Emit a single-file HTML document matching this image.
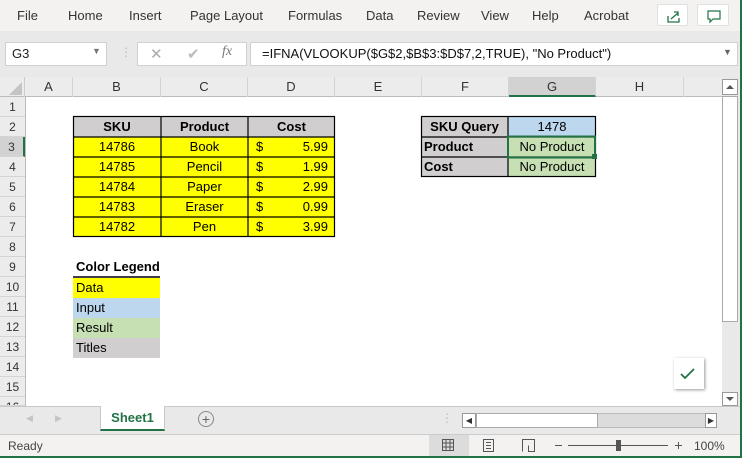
<!DOCTYPE html><html><head><style>
*{box-sizing:border-box;margin:0;padding:0}
body{width:742px;height:458px;overflow:hidden;background:#e9e9e9;font-family:"Liberation Sans",sans-serif;position:relative;font-size:13px;color:#222}
.a{position:absolute}
.tab{position:absolute;top:8px;font-size:13px;color:#333}
.c{position:absolute;height:20px;line-height:20px;font-size:13px;color:#000;text-align:center}
.ch{position:absolute;top:77px;height:20px;line-height:20px;text-align:center;color:#333;font-size:13px;border-right:1px solid #d4d4d4}
.rh{position:absolute;left:0;width:25px;height:20px;line-height:20px;text-align:center;color:#333;font-size:12px;border-bottom:1px solid #d4d4d4;background:#ececec}
</style></head><body>
<div class="a" style="left:0;top:0;width:742px;height:31px;background:#f3f2f1"></div>
<div class="tab" style="left:17px">File</div><div class="tab" style="left:68px">Home</div><div class="tab" style="left:129px">Insert</div><div class="tab" style="left:190px">Page Layout</div><div class="tab" style="left:288px">Formulas</div><div class="tab" style="left:366px">Data</div><div class="tab" style="left:417px">Review</div><div class="tab" style="left:481px">View</div><div class="tab" style="left:532px">Help</div><div class="tab" style="left:584px">Acrobat</div>
<div class="a" style="left:657px;top:4px;width:31px;height:22px;background:#fff;border:1px solid #e0e0e0;border-radius:2px"><svg width="31" height="22"><path d="M10 11v6h11v-4M13 14l7-6M16 7h4v4" stroke="#217346" fill="none" stroke-width="1.3"/></svg></div>
<div class="a" style="left:697px;top:4px;width:32px;height:22px;background:#fff;border:1px solid #e0e0e0;border-radius:2px"><svg width="32" height="22"><path d="M10 6h12v8h-7l-3 3v-3h-2z" stroke="#217346" fill="none" stroke-width="1.2"/></svg></div>
<div class="a" style="left:5px;top:42px;width:102px;height:24px;background:#fff;border:1px solid #d0d0d0"></div>
<div class="a" style="left:12px;top:46px;font-size:13px">G3</div>
<div class="a" style="left:92px;top:46px;font-size:9px;color:#777">▼</div>
<div class="a" style="left:120px;top:45px;color:#bbb;font-size:12px">⋮</div>
<div class="a" style="left:137px;top:42px;width:110px;height:24px;background:#fff;border:1px solid #d0d0d0"></div>
<div class="a" style="left:150px;top:45px;color:#aaa;font-size:15px">✕</div>
<div class="a" style="left:187px;top:45px;color:#bbb;font-size:15px">✔</div>
<div class="a" style="left:222px;top:44px;color:#777;font-style:italic;font-family:'Liberation Serif',serif;font-size:14px">fx</div>
<div class="a" style="left:250px;top:42px;width:488px;height:24px;background:#fff;border:1px solid #d0d0d0"></div>
<div class="a" style="left:262px;top:46px;font-size:13px;color:#111">=IFNA(VLOOKUP($G$2,$B$3:$D$7,2,TRUE), "No Product")</div>
<div class="a" style="left:723px;top:47px;font-size:9px;color:#666">▼</div>
<!-- grid -->
<div class="a" style="left:0;top:77px;width:722px;height:329px;background:#fff"></div>
<div class="a" style="left:0;top:77px;width:722px;height:20px;background:#ececec;border-bottom:1px solid #bbb"></div>
<div class="a" style="left:0;top:77px;width:25px;height:20px;border-right:1px solid #ccc"><svg width="25" height="20"><path d="M22 5v13H9z" fill="#c4c4c4"/></svg></div>
<div class="ch" style="left:25px;width:48px">A</div><div class="ch" style="left:73px;width:88px">B</div><div class="ch" style="left:161px;width:87px">C</div><div class="ch" style="left:248px;width:87px">D</div><div class="ch" style="left:335px;width:87px">E</div><div class="ch" style="left:422px;width:87px">F</div><div class="ch" style="left:509px;width:87px;background:#d2d2d2;border-bottom:2px solid #217346">G</div><div class="ch" style="left:596px;width:88px">H</div>
<div class="rh" style="top:97px">1</div><div class="rh" style="top:117px">2</div><div class="rh" style="top:137px;background:#d2d2d2;border-right:2px solid #217346">3</div><div class="rh" style="top:157px">4</div><div class="rh" style="top:177px">5</div><div class="rh" style="top:197px">6</div><div class="rh" style="top:217px">7</div><div class="rh" style="top:237px">8</div><div class="rh" style="top:257px">9</div><div class="rh" style="top:277px">10</div><div class="rh" style="top:297px">11</div><div class="rh" style="top:317px">12</div><div class="rh" style="top:337px">13</div><div class="rh" style="top:357px">14</div><div class="rh" style="top:377px">15</div><div class="rh" style="top:397px;height:9px;overflow:hidden">16</div>
<div class="a" style="left:25px;top:97px;width:1px;height:309px;background:#bbb"></div>
<!-- main table -->
<div class="a" style="left:73px;top:116px;width:262px;height:21px;background:#d0cece"></div>
<div class="a" style="left:73px;top:137px;width:262px;height:100px;background:#ffff00"></div>
<div class="a" style="left:422px;top:117px;width:86px;height:60px;background:#d0cece"></div>
<div class="a" style="left:508px;top:117px;width:88px;height:20px;background:#bdd7ee"></div>
<div class="a" style="left:508px;top:137px;width:88px;height:40px;background:#c6e0b4"></div>
<div class="a" style="left:73px;top:278px;width:87px;height:20px;background:#ffff00"></div>
<div class="a" style="left:73px;top:298px;width:87px;height:20px;background:#bdd7ee"></div>
<div class="a" style="left:73px;top:318px;width:87px;height:20px;background:#c6e0b4"></div>
<div class="a" style="left:73px;top:338px;width:87px;height:20px;background:#d0cece"></div>
<svg class="a" style="left:0;top:0" width="742" height="458"><g stroke="#000" stroke-width="1.2" fill="none">
<rect x="73.5" y="116.5" width="261" height="120"/>
<path d="M73 137h262M73 157h262M73 177h262M73 197h262M73 217h262M161 116v121M248 116v121"/>
<rect x="421.5" y="116.5" width="174" height="60"/>
<path d="M421 137h175M421 157h175M508 116v61"/></g>
<path d="M73 277h87" stroke="#000" stroke-width="1.5"/>
<rect x="508" y="136.5" width="87" height="21" stroke="#217346" stroke-width="2" fill="none"/><rect x="592" y="154" width="5" height="5" fill="#217346"/></svg>
<div class="c" style="left:73px;top:117px;width:88px;font-weight:bold">SKU</div><div class="c" style="left:161px;top:117px;width:87px;font-weight:bold">Product</div><div class="c" style="left:248px;top:117px;width:87px;font-weight:bold">Cost</div>
<div class="c" style="left:73px;top:137px;width:88px">14786</div><div class="c" style="left:161px;top:137px;width:87px">Book</div><div class="c" style="left:256px;top:137px">$</div><div class="c" style="left:290px;top:137px;width:38px;text-align:right">5.99</div>
<div class="c" style="left:73px;top:157px;width:88px">14785</div><div class="c" style="left:161px;top:157px;width:87px">Pencil</div><div class="c" style="left:256px;top:157px">$</div><div class="c" style="left:290px;top:157px;width:38px;text-align:right">1.99</div>
<div class="c" style="left:73px;top:177px;width:88px">14784</div><div class="c" style="left:161px;top:177px;width:87px">Paper</div><div class="c" style="left:256px;top:177px">$</div><div class="c" style="left:290px;top:177px;width:38px;text-align:right">2.99</div>
<div class="c" style="left:73px;top:197px;width:88px">14783</div><div class="c" style="left:161px;top:197px;width:87px">Eraser</div><div class="c" style="left:256px;top:197px">$</div><div class="c" style="left:290px;top:197px;width:38px;text-align:right">0.99</div>
<div class="c" style="left:73px;top:217px;width:88px">14782</div><div class="c" style="left:161px;top:217px;width:87px">Pen</div><div class="c" style="left:256px;top:217px">$</div><div class="c" style="left:290px;top:217px;width:38px;text-align:right">3.99</div>
<div class="c" style="left:421px;top:117px;width:87px;font-weight:bold">SKU Query</div><div class="c" style="left:508px;top:117px;width:88px">1478</div>
<div class="c" style="left:424px;top:137px;font-weight:bold">Product</div><div class="c" style="left:508px;top:137px;width:88px">No Product</div>
<div class="c" style="left:424px;top:157px;font-weight:bold">Cost</div><div class="c" style="left:508px;top:157px;width:88px">No Product</div>
<div class="c" style="left:76px;top:257px;font-weight:bold">Color Legend</div>
<div class="c" style="left:76px;top:278px">Data</div><div class="c" style="left:76px;top:298px">Input</div><div class="c" style="left:76px;top:318px">Result</div><div class="c" style="left:76px;top:338px">Titles</div>
<!-- check -->
<div class="a" style="left:674px;top:358px;width:30px;height:31px;background:#fff;box-shadow:1px 1px 3px #999"><svg width="30" height="31"><path d="M7 16l4 4 9-9" stroke="#217346" stroke-width="1.8" fill="none"/></svg></div>
<!-- vscroll -->
<div class="a" style="left:722px;top:77px;width:18px;height:329px;background:#e9e9e9"></div>
<div class="a" style="left:722px;top:79px;width:16px;height:16px;border:1px solid #999;background:#fff"><svg width="14" height="14"><path d="M3 9h8l-4-4z" fill="#555"/></svg></div>
<div class="a" style="left:722px;top:96px;width:16px;height:226px;border:1px solid #aaa;background:#fff"></div>
<div class="a" style="left:722px;top:392px;width:16px;height:14px;border:1px solid #999;background:#fff"><svg width="14" height="12"><path d="M3 4h8l-4 4z" fill="#555"/></svg></div>
<!-- tabs -->
<div class="a" style="left:0;top:406px;width:740px;height:28px;background:#e9e9e9;border-top:1px solid #c8c8c8"></div>
<div class="a" style="left:26px;top:413px;color:#c4c4c4;font-size:9px">◀</div>
<div class="a" style="left:55px;top:413px;color:#c4c4c4;font-size:9px">▶</div>
<div class="a" style="left:100px;top:406px;width:65px;height:25px;background:#fff;border-left:1px solid #c8c8c8;border-right:1px solid #c8c8c8;border-bottom:2px solid #217346;color:#217346;font-weight:bold;text-align:center;line-height:23px;font-size:13px">Sheet1</div>
<div class="a" style="left:198px;top:411px;width:16px;height:16px;border:1px solid #888;border-radius:50%;text-align:center;line-height:14px;color:#666;font-size:14px">+</div>
<div class="a" style="left:441px;top:411px;color:#bbb;font-size:12px">⋮</div>
<div class="a" style="left:462px;top:413px;width:255px;height:15px;background:#dcdcdc;border:1px solid #bbb"></div>
<div class="a" style="left:462px;top:413px;width:14px;height:15px;border:1px solid #999;background:#fff;font-size:8px;line-height:13px;text-align:center;color:#333">◀</div>
<div class="a" style="left:476px;top:413px;width:122px;height:15px;border:1px solid #aaa;background:#fff"></div>
<div class="a" style="left:705px;top:413px;width:12px;height:15px;border:1px solid #999;background:#fff;font-size:8px;line-height:13px;text-align:center;color:#333">▶</div>
<!-- status -->
<div class="a" style="left:0;top:434px;width:742px;height:24px;background:#f3f2f1;border-top:1px solid #ccc"></div>
<div class="a" style="left:8px;top:439px;font-size:12px;color:#444">Ready</div>
<div class="a" style="left:429px;top:435px;width:40px;height:21px;background:#dcdcdc"></div>
<svg class="a" style="left:0;top:434px" width="742" height="24"><g stroke="#555" fill="none"><rect x="442.5" y="5.5" width="11" height="11"/><path d="M446 5v12M450 5v12M442 9h12M442 13h12"/><rect x="483.5" y="5.5" width="10" height="12"/><path d="M486 8.5h5M486 11.5h5M486 14.5h5"/><path d="M522.5 17.5v-12h12v12h-6v-6"/><path d="M555 11.5h7M568 11.5h100M675 11.5h7M678.5 8v7"/></g><rect x="616" y="6" width="5" height="11" fill="#555"/></svg>
<div class="a" style="left:694px;top:439px;font-size:12px;color:#444">100%</div>
<div class="a" style="left:740px;top:0;width:2px;height:458px;background:#217346"></div>
<div class="a" style="left:0;top:456px;width:742px;height:2px;background:#217346"></div>
</body></html>
